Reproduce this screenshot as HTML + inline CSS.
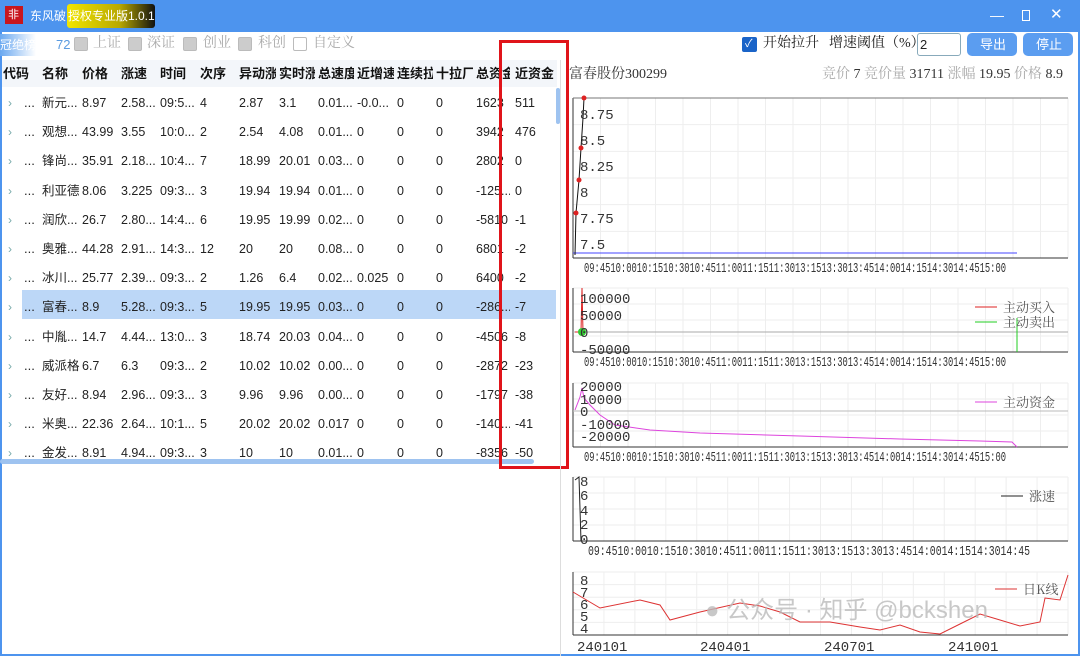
<!DOCTYPE html>
<html><head><meta charset="utf-8"><style>
*{margin:0;padding:0;box-sizing:border-box}
body{width:1080px;height:656px;overflow:hidden;background:#fff;font-family:"Liberation Sans","Noto Sans CJK SC",sans-serif;position:relative;font-size:13px;color:#222}
.t{position:absolute;white-space:nowrap;line-height:16px;height:16px}
.title{position:absolute;left:0;top:0;width:1080px;height:32px;background:#4d94ee}
.cb{position:absolute;width:14px;height:14px;border:1px solid #bbb;background:#ccc;border-radius:2px}
.hdr{font-weight:bold;font-size:13px;color:#111;overflow:hidden}
.s{font-family:"Liberation Serif","Noto Serif CJK SC",serif}
</style></head><body>
<div class="title"></div>
<div style="position:absolute;left:5px;top:6px;width:18px;height:18px;background:#c8161d"></div>
<div class="t" style="left:8px;top:7px;color:#fff;font-size:11px">非</div>
<div class="t" style="left:30px;top:8px;color:#fff;font-size:12px">东风破</div>
<div style="position:absolute;left:67px;top:4px;width:88px;height:24px;background:linear-gradient(90deg,#f2e600,#b8a800 60%,#111);border-radius:3px"></div>
<div class="t" style="left:68px;top:8px;color:#fff;font-size:12px">授权专业版1.0.1</div>
<div class="t" style="left:990px;top:7px;color:#fff;font-size:14px">—</div>
<div style="position:absolute;left:1022px;top:10px;width:8px;height:11px;border:1px solid #fff"></div>
<div class="t" style="left:1050px;top:7px;color:#fff;font-size:15px">✕</div>
<div style="position:absolute;left:0;top:32px;width:2px;height:624px;background:#4d94ee"></div>
<div style="position:absolute;left:1078px;top:32px;width:2px;height:624px;background:#4d94ee"></div>
<div style="position:absolute;left:0;top:654px;width:1080px;height:2px;background:#4d94ee"></div>
<!-- toolbar -->
<div style="position:absolute;left:0;top:34px;width:36px;height:22px;background:linear-gradient(90deg,#6aa8f0,#fff)"></div>
<div class="t" style="left:0;top:37px;color:#fff;font-size:12px">冠绝榜</div>
<div class="t" style="left:56px;top:37px;color:#5b9be0;font-size:13px">72</div>
<div class="cb" style="left:74px;top:37px"></div><div class="t s" style="left:93px;top:36px;color:#aaa;font-size:14px">上证</div>
<div class="cb" style="left:128px;top:37px"></div><div class="t s" style="left:147px;top:36px;color:#aaa;font-size:14px">深证</div>
<div class="cb" style="left:183px;top:37px"></div><div class="t s" style="left:203px;top:36px;color:#aaa;font-size:14px">创业</div>
<div class="cb" style="left:238px;top:37px"></div><div class="t s" style="left:258px;top:36px;color:#aaa;font-size:14px">科创</div>
<div class="cb" style="left:293px;top:37px;background:#fff"></div><div class="t s" style="left:313px;top:36px;color:#aaa;font-size:14px">自定义</div>
<div style="position:absolute;left:742px;top:37px;width:15px;height:15px;background:#1a64c8;border-radius:2px"></div>
<div class="t" style="left:745px;top:36px;color:#fff;font-size:11px">✓</div>
<div class="t s" style="left:763px;top:36px;font-size:14px">开始拉升</div>
<div class="t s" style="left:829px;top:36px;font-size:14px">增速阈值（%）</div>
<div style="position:absolute;left:917px;top:33px;width:44px;height:23px;border:1px solid #8ab;border-radius:3px;background:#fff"></div>
<div class="t" style="left:920px;top:37px;font-size:13px">2</div>
<div style="position:absolute;left:967px;top:33px;width:50px;height:23px;background:#5b9df0;border-radius:5px"></div>
<div class="t" style="left:980px;top:37px;color:#fff;font-size:13px">导出</div>
<div style="position:absolute;left:1023px;top:33px;width:50px;height:23px;background:#5b9df0;border-radius:5px"></div>
<div class="t" style="left:1036px;top:37px;color:#fff;font-size:13px">停止</div>
<!-- table -->
<div style="position:absolute;left:2px;top:60px;width:555px;height:27px;background:#f3f6fa"></div>
<div class="t hdr" style="left:3px;top:66px;width:36px">代码</div>
<div class="t hdr" style="left:42px;top:66px;width:36px">名称</div>
<div class="t hdr" style="left:82px;top:66px;width:36px">价格</div>
<div class="t hdr" style="left:121px;top:66px;width:36px">涨速</div>
<div class="t hdr" style="left:160px;top:66px;width:36px">时间</div>
<div class="t hdr" style="left:200px;top:66px;width:36px">次序</div>
<div class="t hdr" style="left:239px;top:66px;width:37px">异动涨</div>
<div class="t hdr" style="left:279px;top:66px;width:36px">实时涨</div>
<div class="t hdr" style="left:318px;top:66px;width:36px">总速度</div>
<div class="t hdr" style="left:357px;top:66px;width:37px">近增速</div>
<div class="t hdr" style="left:397px;top:66px;width:36px">连续拉</div>
<div class="t hdr" style="left:436px;top:66px;width:37px">十拉厂</div>
<div class="t hdr" style="left:476px;top:66px;width:36px">总资金</div>
<div style="position:absolute;left:510px;top:62px;width:46px;height:22px;background:#f3f6fa"></div>
<div class="t hdr" style="left:515px;top:66px">近资金</div>
<div style="position:absolute;left:22px;top:290px;width:534px;height:29px;background:#bcd7f7"></div>
<div style="position:absolute;left:556px;top:88px;width:4px;height:36px;background:#9ec3f0;border-radius:2px"></div>
<div style="position:absolute;left:0px;top:459px;width:534px;height:5px;background:#9ec3f0;border-radius:3px"></div>
<div id="rows"></div>
<div style="position:absolute;left:499px;top:40px;width:70px;height:429px;border:3px solid #e0141a"></div>
<div style="position:absolute;left:560px;top:60px;width:1px;height:596px;background:#ddd"></div>
<!-- right -->
<div class="t s" style="left:569px;top:67px;font-size:14px;color:#333">富春股份300299</div>
<div class="t s" style="left:822px;top:67px;font-size:14px;color:#aaa">竞价 <span style="color:#333">7</span> 竞价量 <span style="color:#333">31711</span> 涨幅 <span style="color:#333">19.95</span> 价格 <span style="color:#333">8.9</span></div>
<svg style="position:absolute;left:0;top:0" width="1080" height="656" font-family="Liberation Mono, DejaVu Sans Mono, monospace" font-size="14">
<g id="g"></g>
</svg>
<script>
const rows=[["新元...","8.97","2.58...","09:5...","4","2.87","3.1","0.01...","-0.0...","0","0","1623","511"],
["观想...","43.99","3.55","10:0...","2","2.54","4.08","0.01...","0","0","0","3942","476"],
["锋尚...","35.91","2.18...","10:4...","7","18.99","20.01","0.03...","0","0","0","2802","0"],
["利亚德","8.06","3.225","09:3...","3","19.94","19.94","0.01...","0","0","0","-125...","0"],
["润欣...","26.7","2.80...","14:4...","6","19.95","19.99","0.02...","0","0","0","-5810","-1"],
["奥雅...","44.28","2.91...","14:3...","12","20","20","0.08...","0","0","0","6801","-2"],
["冰川...","25.77","2.39...","09:3...","2","1.26","6.4","0.02...","0.025","0","0","6400","-2"],
["富春...","8.9","5.28...","09:3...","5","19.95","19.95","0.03...","0","0","0","-286...","-7"],
["中胤...","14.7","4.44...","13:0...","3","18.74","20.03","0.04...","0","0","0","-4506","-8"],
["威派格","6.7","6.3","09:3...","2","10.02","10.02","0.00...","0","0","0","-2872","-23"],
["友好...","8.94","2.96...","09:3...","3","9.96","9.96","0.00...","0","0","0","-1797","-38"],
["米奥...","22.36","2.64...","10:1...","5","20.02","20.02","0.017","0","0","0","-140...","-41"],
["金发...","8.91","4.94...","09:3...","3","10","10","0.01...","0","0","0","-8356","-50"]];
const xs=[42,82,121,160,200,239,279,318,357,397,436,476,515];
let h="";
rows.forEach((r,i)=>{const y=95+i*29.2;
h+=`<div class="t" style="left:8px;top:${y}px;color:#7aa;font-size:12px">›</div><div class="t" style="left:24px;top:${y}px">...</div>`;
r.forEach((c,j)=>{h+=`<div class="t" style="left:${xs[j]}px;top:${y}px;font-size:12.5px;width:${j==11?34:40}px;overflow:hidden">${c}</div>`});});
document.getElementById("rows").innerHTML=h;
let s="";
function grid(x0,x1,y0,y1,n,m){for(let i=0;i<=n;i++){let x=x0+(x1-x0)*i/n;s+=`<line x1="${x}" y1="${y0}" x2="${x}" y2="${y1}" stroke="#eee"/>`}
for(let i=0;i<=m;i++){let y=y0+(y1-y0)*i/m;s+=`<line x1="${x0}" y1="${y}" x2="${x1}" y2="${y}" stroke="#eee"/>`}
s+=`<line x1="${x0}" y1="${y0}" x2="${x0}" y2="${y1}" stroke="#333"/><line x1="${x0}" y1="${y1}" x2="${x1}" y2="${y1}" stroke="#333"/>`}
const tl="09:4510:0010:1510:3010:4511:0011:1511:3013:1513:3013:4514:0014:1514:3014:4515:00";
grid(573,1068,98,258,18,6);s+=`<line x1="573" y1="98" x2="1068" y2="98" stroke="#777"/><line x1="573" y1="253" x2="1017" y2="253" stroke="#44f"/>`;
s+=`<polyline points="575,255 576,213 579,180 581,148 583,118 584,98" fill="none" stroke="#111"/>`;
[[576,213],[579,180],[581,148],[584,98]].forEach(p=>s+=`<circle cx="${p[0]}" cy="${p[1]}" r="2.5" fill="#d22"/>`);
[["8.75",119],["8.5",145],["8.25",171],["8",197],["7.75",223],["7.5",249]].forEach(a=>s+=`<text x="580" y="${a[1]}" fill="#333">${a[0]}</text>`);
s+=`<text x="584" y="272" fill="#333" textLength="422" lengthAdjust="spacingAndGlyphs">${tl}</text>`;
grid(573,1068,288,352,18,4);s+=`<line x1="573" y1="332" x2="1068" y2="332" stroke="#aaa"/><line x1="1017" y1="318" x2="1017" y2="352" stroke="#2c2"/><polyline points="575,332 581,332 582,288 583,332" fill="none" stroke="#d22"/><circle cx="582" cy="332" r="4" fill="#3c3"/>`;
[["100000",303],["50000",320],["0",337],["-50000",354]].forEach(a=>s+=`<text x="580" y="${a[1]}" fill="#333">${a[0]}</text>`);
s+=`<text x="584" y="366" fill="#333" textLength="422" lengthAdjust="spacingAndGlyphs">${tl}</text>`;
s+=`<line x1="975" y1="307" x2="997" y2="307" stroke="#d22"/><line x1="975" y1="322" x2="997" y2="322" stroke="#2c2"/><text x="1003" y="312" fill="#555" font-family="Noto Serif CJK SC,serif" font-size="13">主动买入</text><text x="1003" y="327" fill="#555" font-family="Noto Serif CJK SC,serif" font-size="13">主动卖出</text>`;
grid(573,1068,383,447,18,4);s+=`<line x1="573" y1="411" x2="1068" y2="411" stroke="#bbb"/><polyline points="575,410 580,397 582,388 584,398 590,405 600,415 615,425 650,430 700,433 800,436 900,439 980,441 1012,442 1017,447" fill="none" stroke="#d4d"/>`;
[["20000",391],["10000",404],["0",416],["-10000",429],["-20000",441]].forEach(a=>s+=`<text x="580" y="${a[1]}" fill="#333">${a[0]}</text>`);
s+=`<text x="584" y="461" fill="#333" textLength="422" lengthAdjust="spacingAndGlyphs">${tl}</text>`;
s+=`<line x1="975" y1="402" x2="997" y2="402" stroke="#d4d"/><text x="1003" y="407" fill="#555" font-family="Noto Serif CJK SC,serif" font-size="13">主动资金</text>`;
grid(573,1068,477,541,16,4);s+=`<polyline points="575,480 579,477 581,541" fill="none" stroke="#222"/>`;
[["8",486],["6",500],["4",515],["2",529],["0",544]].forEach(a=>s+=`<text x="580" y="${a[1]}" fill="#333">${a[0]}</text>`);
s+=`<text x="588" y="555" fill="#333" textLength="442" lengthAdjust="spacingAndGlyphs">09:4510:0010:1510:3010:4511:0011:1511:3013:1513:3013:4514:0014:1514:3014:45</text>`;
s+=`<line x1="1001" y1="496" x2="1023" y2="496" stroke="#222"/><text x="1029" y="501" fill="#555" font-family="Noto Serif CJK SC,serif" font-size="13">涨速</text>`;
grid(573,1068,572,635,16,5);
let p="573,592";const pts=[[600,608],[640,600],[660,605],[670,620],[700,612],[740,603],[760,606],[780,612],[800,622],[830,622],[860,627],[880,630],[900,625],[920,632],[940,634],[960,624],[980,614],[1000,620],[1020,626],[1040,622],[1045,598],[1060,600],[1068,575]];
pts.forEach(q=>p+=" "+q[0]+","+q[1]);s+=`<polyline points="${p}" fill="none" stroke="#d33"/>`;
["8","7","6","5","4"].forEach((a,i)=>s+=`<text x="580" y="${585+i*12}" fill="#333">${a}</text>`);
[["240101",577],["240401",700],["240701",824],["241001",948]].forEach(a=>s+=`<text x="${a[1]}" y="651" fill="#333">${a[0]}</text>`);
s+=`<line x1="995" y1="589" x2="1017" y2="589" stroke="#d33"/><text x="1023" y="594" fill="#555" font-family="Noto Serif CJK SC,serif" font-size="13">日K线</text>`;
s+=`<text x="705" y="618" fill="#bbb" font-family="Liberation Sans,Noto Sans CJK SC,sans-serif" font-size="24" opacity="0.8">● 公众号 · 知乎 @bckshen</text>`;
document.getElementById("g").innerHTML=s;
</script>
</body></html>
